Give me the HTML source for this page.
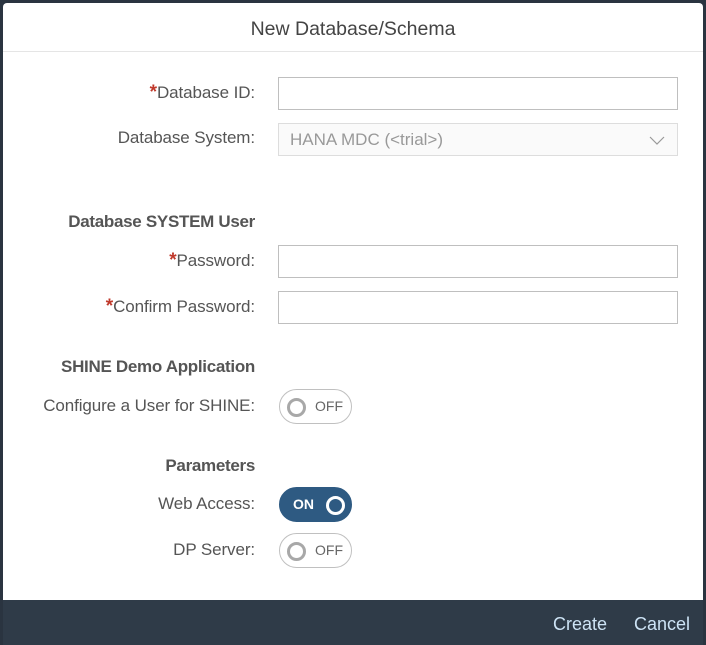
<!DOCTYPE html>
<html><head><style>
*{box-sizing:border-box;margin:0;padding:0}
body{width:706px;height:645px;background:#2a3440;font-family:"Liberation Sans",Arial,sans-serif;position:relative;overflow:hidden}
.dlg{position:absolute;left:3px;top:3px;width:700px;height:642px;background:#fff;border-radius:4px 4px 0 0;overflow:hidden}
.hdr{height:49px;border-bottom:1px solid #e5e5e5;text-align:center;line-height:52px;font-size:19.5px;color:#444}
.lbl{position:absolute;right:448px;font-size:17px;color:#555;white-space:nowrap;text-align:right;letter-spacing:-0.1px}
.st{color:#c0392b;font-weight:bold;font-size:19px}
.h{font-weight:bold;color:#555;letter-spacing:-0.3px}
.inp{position:absolute;left:275px;width:400px;height:33px;border:1px solid #bfbfbf;background:#fff}
.sel{background:#fafafa;border-color:#ddd;color:#999;font-size:17px;line-height:31px;padding-left:11px}
.tg{position:absolute;left:276px;width:73px;height:35px;border:1px solid #c0c0c0;border-radius:18px;background:#fff}
.tg .k{position:absolute;left:7px;top:8px;width:19px;height:19px;border:3px solid #a8a8a8;border-radius:50%}
.tg .t{position:absolute;left:35px;top:0;line-height:33px;font-size:14px;color:#666}
.on{background:#2e5a82;border-color:#2e5a82}
.on .k{left:46px;border-color:#fff}
.on .t{left:13px;color:#fff;font-weight:bold}
.ftr{position:absolute;left:0;top:597px;width:700px;height:45px;background:#2f3b48}
.ftr span{position:absolute;top:14px;font-size:18px;color:#cde3f5}
</style></head><body>
<div class="dlg">
<div class="hdr">New Database/Schema</div>
<div class="lbl" style="top:79px"><span class="st">*</span>Database ID:</div>
<div class="inp" style="top:74px"></div>
<div class="lbl" style="top:125px">Database System:</div>
<div class="inp sel" style="top:120px">HANA MDC (&lt;trial&gt;)<svg style="position:absolute;right:12px;top:12px" width="16" height="9"><path d="M1 1 L8 8 L15 1" fill="none" stroke="#999" stroke-width="1.2"/></svg></div>
<div class="lbl h" style="top:209px">Database SYSTEM User</div>
<div class="lbl" style="top:247px"><span class="st">*</span>Password:</div>
<div class="inp" style="top:242px"></div>
<div class="lbl" style="top:293px"><span class="st">*</span>Confirm Password:</div>
<div class="inp" style="top:288px"></div>
<div class="lbl h" style="top:354px">SHINE Demo Application</div>
<div class="lbl" style="top:393px">Configure a User for SHINE:</div>
<div class="tg" style="top:386px"><div class="k"></div><div class="t">OFF</div></div>
<div class="lbl h" style="top:453px">Parameters</div>
<div class="lbl" style="top:491px">Web Access:</div>
<div class="tg on" style="top:484px"><div class="k"></div><div class="t">ON</div></div>
<div class="lbl" style="top:537px">DP Server:</div>
<div class="tg" style="top:530px"><div class="k"></div><div class="t">OFF</div></div>
<div class="ftr"><span style="left:550px">Create</span><span style="left:631px">Cancel</span></div>
</div>
</body></html>
